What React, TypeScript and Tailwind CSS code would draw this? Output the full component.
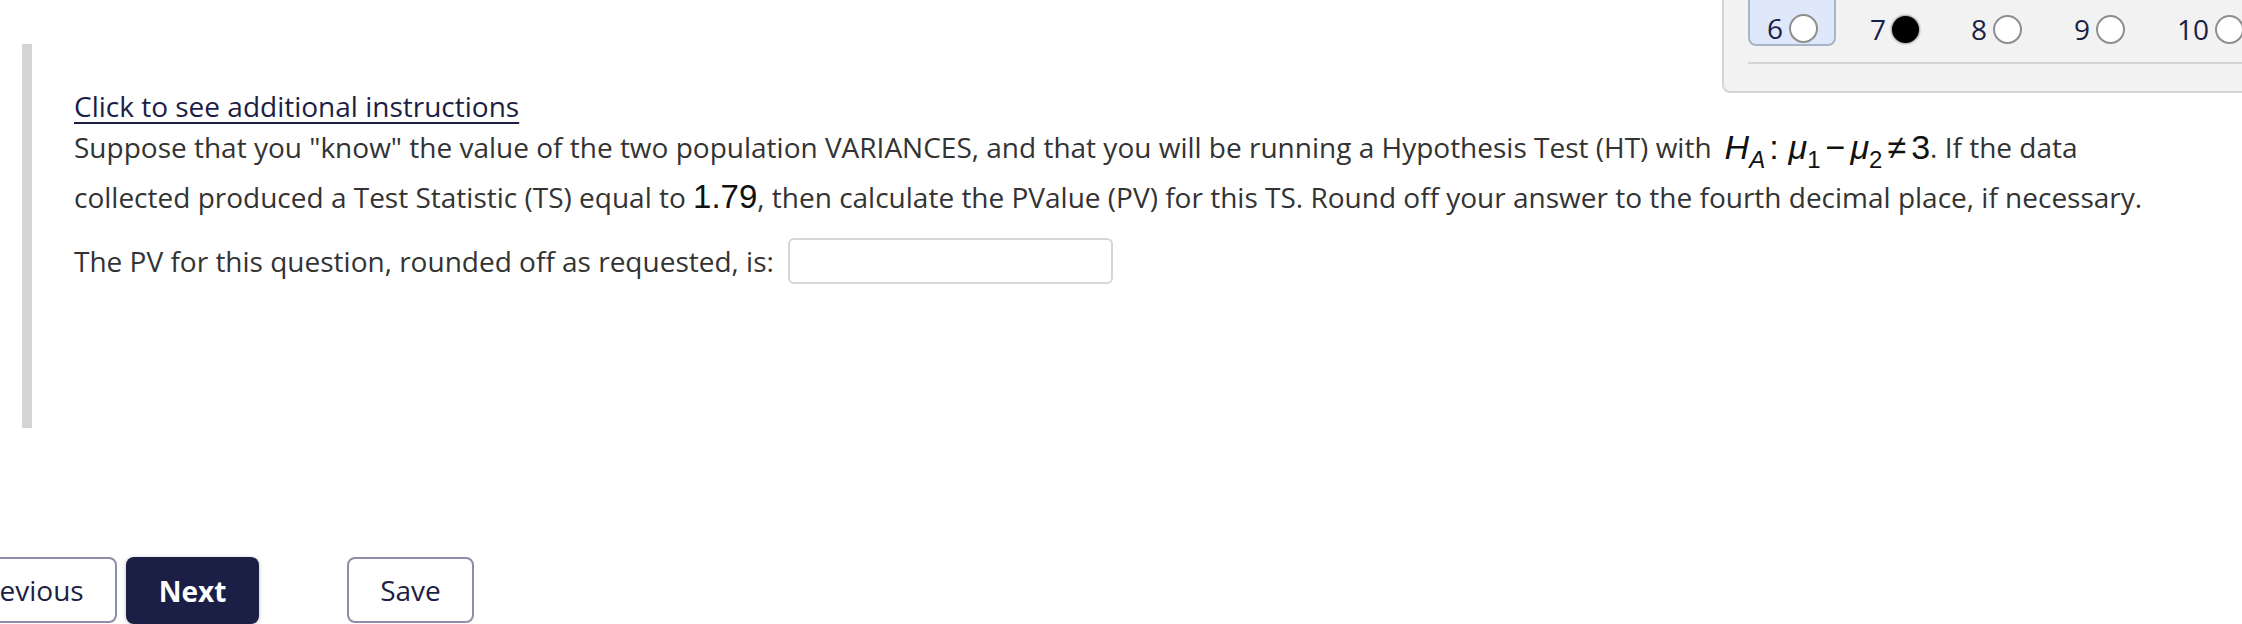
import React from "react"

const choices = ["6", "7", "8", "9", "10"]

// navigation panel with radio choices (top right, partly off screen)
function ChoicePanel() {
    return (
        <div className="float-right -mt-[26px] h-[119px] w-[520px] rounded-bl-[8px] border-b-2 border-l-2 border-[#d4d4d4] bg-[#f2f2f2] pl-[24px]">
            <div className="flex h-[72px] items-stretch gap-[15px] whitespace-nowrap">
                {choices.map((c) => {
                    const current = c === "6"
                    const checked = c === "7"
                    return (
                        <div
                            key={c}
                            className={
                                current
                                    ? "flex items-center gap-[6px] rounded-b-[8px] border-2 border-t-0 border-[#a9b4c8] bg-[#dfe8fb] pl-[17px] pr-[16px] pt-[38px]"
                                    : "flex items-center gap-[6px] border-2 border-transparent pl-[17px] pr-[16px] pt-[38px]"
                            }
                        >
                            <span className="text-[28px] leading-none text-[#1b1e45]">{c}</span>
                            <span
                                className={
                                    checked
                                        ? "h-[27px] w-[27px] shrink-0 rounded-full bg-black shadow-[0_0_2px_1px_#9a9a9a]"
                                        : "h-[29px] w-[29px] shrink-0 rounded-full border-2 border-[#8e8e8e] bg-white"
                                }
                            />
                        </div>
                    )
                })}
            </div>
            <div className="mt-[16px] h-[2px] bg-[#d4d4d4]" />
        </div>
    )
}

function Sub({ children, italic }: { children: React.ReactNode; italic?: boolean }) {
    return (
        <span className={italic ? "relative top-[9px] text-[24px] italic" : "relative top-[9px] text-[24px] not-italic"}>
            {children}
        </span>
    )
}

export default function App() {
    return (
        <div className="h-[624px] w-[2242px] overflow-hidden bg-white font-['Open_Sans',sans-serif] text-[#333333]">
            <div className="flow-root">
                <ChoicePanel />
                {/* question block */}
                <div className="ml-[22px] mt-[44px] h-[384px] border-l-[10px] border-[#d3d4d6] pl-[42px] pt-[42px] text-[28px]">
                    <div className="flex h-[40px] items-center">
                        <a href="#" className="text-[#1b1e45] underline decoration-[2px] underline-offset-[5px]">
                            Click to see additional instructions
                        </a>
                    </div>
                    <div className="flex h-[42px] items-center whitespace-nowrap">
                        Suppose that you "know" the value of the two population VARIANCES, and that you will be running a Hypothesis Test (HT) with
                        <span className="ml-[13px] font-['Liberation_Sans',Arial,sans-serif] text-[34px] italic text-[#111]">
                            H<Sub italic>A</Sub>
                            <span className="ml-[4px] mr-[10px] not-italic">:</span>μ<Sub>1</Sub>
                            <span className="mx-[5px] not-italic">−</span>μ<Sub>2</Sub>
                            <span className="mx-[5px] not-italic">≠</span>
                            <span className="not-italic">3</span>
                        </span>
                        . If the data
                    </div>
                    <div className="flex h-[58px] items-center whitespace-nowrap">
                        collected produced a Test Statistic (TS) equal to&nbsp;
                        <span className="font-['Liberation_Sans',Arial,sans-serif] text-[33px] text-[#111]">1.79</span>
                        , then calculate the PValue (PV) for this TS. Round off your answer to the fourth decimal place, if necessary.
                    </div>
                    <div className="mt-[12px] flex items-center whitespace-nowrap">
                        <span>The PV for this question, rounded off as requested, is:</span>
                        <input
                            type="text"
                            className="ml-[14px] h-[46px] w-[325px] rounded-[6px] border-2 border-[#d6d6d6] bg-white px-3 outline-none"
                        />
                    </div>
                </div>
            </div>

            {/* footer buttons */}
            <div className="mt-[129px] flex items-start text-[28px]">
                <button className="-ml-[62px] flex h-[66px] w-[179px] items-center justify-center rounded-[8px] border-2 border-[#8c8fa5] bg-white text-[#1b1e45]">
                    Previous
                </button>
                <button className="ml-[9px] flex h-[67px] w-[133px] items-center justify-center rounded-[8px] bg-[#1b1e45] font-bold text-white shadow-[0_1px_4px_rgba(0,0,0,0.25)]">
                    Next
                </button>
                <button className="ml-[88px] flex h-[66px] w-[127px] items-center justify-center rounded-[8px] border-2 border-[#8c8fa5] bg-white text-[#1b1e45]">
                    Save
                </button>
            </div>
        </div>
    )
}
